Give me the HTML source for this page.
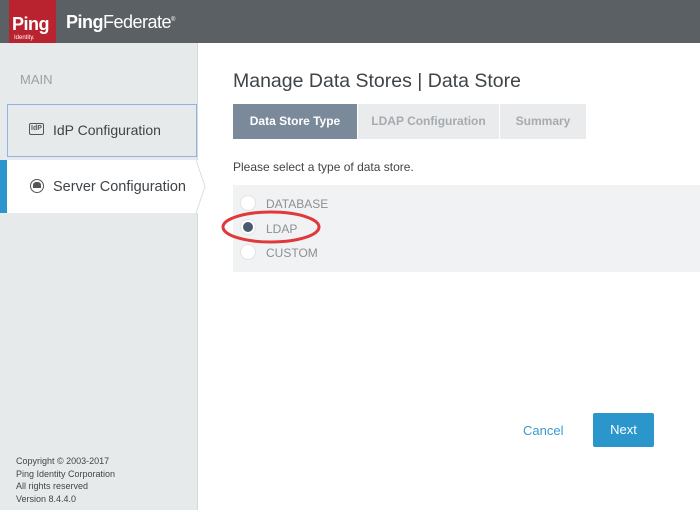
<!DOCTYPE html>
<html><head><style>
*{margin:0;padding:0;box-sizing:border-box}
body{width:700px;height:510px;overflow:hidden;background:#fff;font-family:"Liberation Sans",sans-serif;position:relative}
.a{position:absolute}
</style></head><body>
<div class="a" style="left:0;top:0;width:700px;height:43px;background:#5a6064"></div>
<div class="a" style="left:9px;top:0;width:47px;height:47px;background:#b8232f"></div>
<div class="a" style="left:12px;top:14px;color:#fff;font-weight:bold;font-size:18px;letter-spacing:-0.5px">Ping</div>
<div class="a" style="left:14px;top:35px;color:#fff;font-size:6px">Identity.</div>
<div class="a" style="left:66px;top:12px;color:#fff;font-size:18px;letter-spacing:-0.5px"><b>Ping</b>Federate<sup style="font-size:6px">®</sup></div>

<div class="a" style="left:0;top:43px;width:198px;height:467px;background:#e7eaeb;border-right:1px solid #d6d9db"></div>
<div class="a" style="left:20px;top:72px;color:#9aa0a4;font-size:13px">MAIN</div>
<div class="a" style="left:7px;top:104px;width:190px;height:53px;border:1px solid #8fb3e8;background:#e7eaeb"></div>
<div class="a" style="left:29px;top:123px;width:15px;height:12px;border:1.5px solid #555;border-radius:2px;font-size:7px;font-weight:bold;color:#555;text-align:center;line-height:9px">IdP</div>
<div class="a" style="left:53px;top:122px;color:#3e4448;font-size:14px">IdP Configuration</div>
<div class="a" style="left:0;top:160px;width:198px;height:53px;background:#fff"></div>
<svg class="a" style="left:196px;top:160px" width="12" height="53"><path d="M0 0 L9 26.5 L0 53" fill="#fff" stroke="#ddd"/></svg>
<div class="a" style="left:0;top:160px;width:7px;height:53px;background:#2b96cc"></div>
<div class="a" style="left:30px;top:179px;width:14px;height:14px;border-radius:50%;border:1.5px solid #555"></div>
<div class="a" style="left:33px;top:182px;width:8px;height:6px;background:#555;border-radius:3px 3px 0 0"></div>
<div class="a" style="left:53px;top:179px;color:#3e4448;font-size:14.5px">Server Configuration</div>
<div class="a" style="left:16px;top:455px;color:#444;font-size:9px;line-height:12.5px">Copyright © 2003-2017<br>Ping Identity Corporation<br>All rights reserved<br>Version 8.4.4.0</div>

<div class="a" style="left:233px;top:70px;color:#3e4448;font-size:19.5px">Manage Data Stores | Data Store</div>
<div class="a" style="left:233px;top:104px;width:124px;height:35px;background:#7a8a9b;color:#fff;font-weight:bold;font-size:12px;text-align:center;line-height:35px">Data Store Type</div>
<div class="a" style="left:358px;top:104px;width:141px;height:35px;background:#e9ebec;color:#a6abaf;font-weight:bold;font-size:12px;text-align:center;line-height:35px">LDAP Configuration</div>
<div class="a" style="left:500px;top:104px;width:86px;height:35px;background:#e9ebec;color:#a6abaf;font-weight:bold;font-size:12px;text-align:center;line-height:35px">Summary</div>
<div class="a" style="left:233px;top:160px;color:#444;font-size:12px">Please select a type of data store.</div>
<div class="a" style="left:233px;top:185px;width:467px;height:87px;background:#f1f2f3"></div>
<div class="a" style="left:240px;top:195px;width:16px;height:16px;border-radius:50%;background:#fff;border:1px solid #e2e4e5"></div>
<div class="a" style="left:240px;top:219px;width:16px;height:16px;border-radius:50%;background:#fff;border:1px solid #e2e4e5"></div>
<div class="a" style="left:243px;top:222px;width:10px;height:10px;border-radius:50%;background:#485a70"></div>
<div class="a" style="left:240px;top:244px;width:16px;height:16px;border-radius:50%;background:#fff;border:1px solid #e2e4e5"></div>
<div class="a" style="left:266px;top:197px;color:#8a9094;font-size:12px">DATABASE</div>
<div class="a" style="left:266px;top:222px;color:#8a9094;font-size:12px">LDAP</div>
<div class="a" style="left:266px;top:246px;color:#8a9094;font-size:12px">CUSTOM</div>
<svg class="a" style="left:215px;top:205px" width="110" height="46"><ellipse cx="56" cy="22" rx="48" ry="15" fill="none" stroke="#e0383b" stroke-width="3"/></svg>
<div class="a" style="left:523px;top:423px;color:#3c9ad0;font-size:13px">Cancel</div>
<div class="a" style="left:593px;top:413px;width:61px;height:34px;background:#2a96cc;border-radius:2px;color:#fff;font-size:13px;text-align:center;line-height:34px">Next</div>
</body></html>
